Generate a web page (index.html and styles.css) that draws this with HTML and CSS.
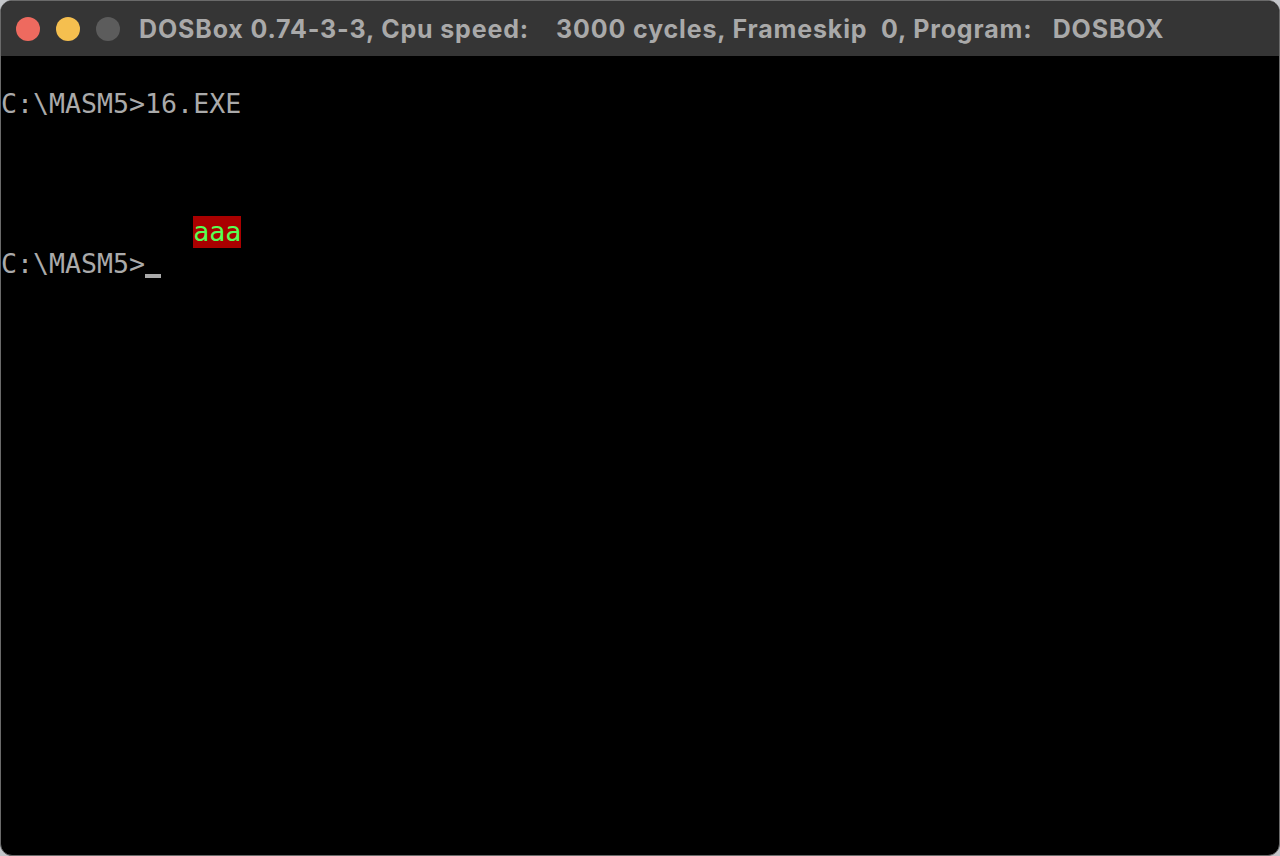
FILE: index.html
```html
<!DOCTYPE html>
<html lang="en">
    <head>
        <meta name="viewport" content="width=device-width, initial-scale=1.0">
        <title>DOSBox</title>
        <link rel="stylesheet" href="styles.css">
    </head>
    <body>
        <div class="win">
            <div class="bar">
                <span class="dot red"></span>
                <span class="dot yellow"></span>
                <span class="dot gray"></span>
                <span class="title">DOSBox 0.74-3-3, Cpu speed:    3000 cycles, Frameskip  0, Program:   DOSBOX</span>
            </div>
            <div class="screen">
                <div class="row"></div>
                <div class="row">C:\MASM5&gt;16.EXE</div>
                <div class="row"></div>
                <div class="row"></div>
                <div class="row"></div>
                <div class="row">            <span class="hl">aaa</span></div>
                <div class="row">C:\MASM5&gt;<span class="cursor"></span></div>
            </div>
        </div>
    </body>
</html>
```

FILE: styles.css
```css
body {
    margin: 0;
    background-color: #c4c6ca;
}
.win {
    width: 1280px;
    height: 856px;
    box-sizing: border-box;
    border: 1px solid #6a6a6a;
    border-radius: 12px;
    overflow: hidden;
    background-color: black;
    display: flex;
    flex-direction: column;
}
.bar {
    height: 55px;
    flex-shrink: 0;
    background-color: #353535;
    display: flex;
    align-items: center;
    padding-left: 15px;
    gap: 16px;
}
.dot {
    width: 24px;
    height: 24px;
    border-radius: 50%;
}
.red {
    background-color: #ee6a5f;
}
.yellow {
    background-color: #f5bf4f;
}
.gray {
    background-color: #5c5c5c;
}
.title {
    margin-left: 3px;
    white-space: pre;
    color: #a9a9a9;
    font-family: Inter, "Open Sans", sans-serif;
    font-weight: bold;
    font-size: 25px;
    letter-spacing: 0.85px;
}
.screen {
    flex: 1;
    font-family: "DejaVu Sans Mono", monospace;
    font-size: 26.6px;
    color: #aaaaaa;
}
.row {
    height: 32px;
    line-height: 32px;
    white-space: pre;
}
.hl {
    display: inline-block;
    height: 32px;
    vertical-align: top;
    background-color: #aa0000;
    color: #55ff55;
}
.cursor {
    display: inline-block;
    width: 16px;
    height: 32px;
    vertical-align: top;
    background: linear-gradient(transparent 26px, #aaaaaa 26px, #aaaaaa 30px, transparent 30px);
}
```
